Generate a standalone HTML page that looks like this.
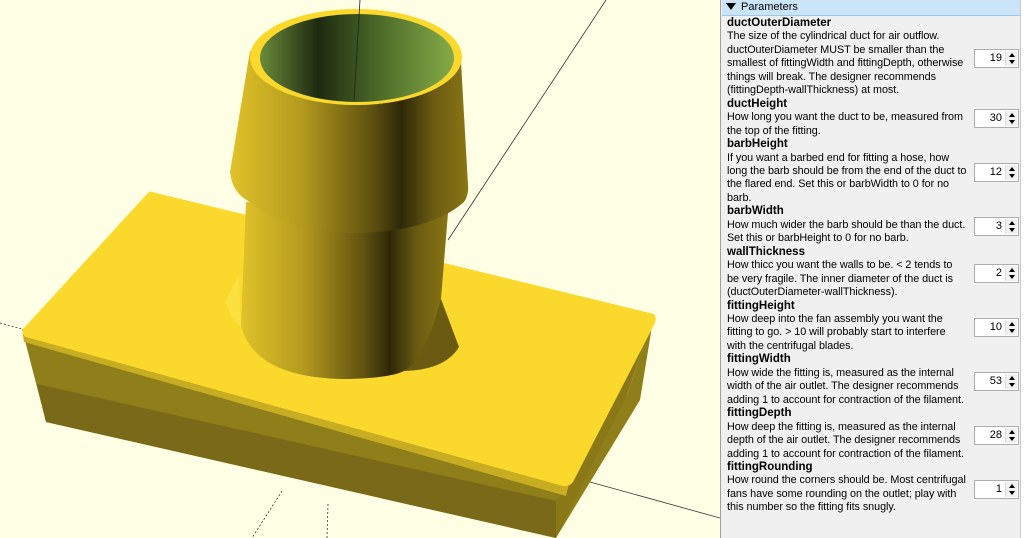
<!DOCTYPE html>
<html><head><meta charset="utf-8"><style>
*{margin:0;padding:0;box-sizing:border-box}
body{width:1024px;height:538px;overflow:hidden;background:#ffffe5;position:relative;font-family:"Liberation Sans",sans-serif}
#view{position:absolute;left:0;top:0}
#panel{position:absolute;left:720px;top:0;width:304px;height:538px;background:#f0f0f0;border-left:1px solid #a0a0a0}
#panel .edge{position:absolute;right:0;top:0;width:4px;height:538px;background:#fff;border-left:1px solid #c8c8c8}
#hdr{position:absolute;left:1px;top:0;width:298px;height:16px;background:#cce4f7;border-bottom:1px solid #99c9ef;font-size:11px;line-height:15px;padding-left:4px;color:#000}
#hdr span{display:inline-block;width:0;height:0;border-left:5px solid transparent;border-right:5px solid transparent;border-top:7px solid #000;margin-right:5px;vertical-align:0px}
#txt{position:absolute;left:6px;top:17px;font-size:10.8px;line-height:13.45px;color:#000;white-space:nowrap;letter-spacing:-0.05px}
#txt b{font-size:11.5px;letter-spacing:0}
.sp{position:absolute;left:253px;width:45px;height:19px;background:#fff;border:1px solid #adadad;font-size:11px;text-align:right;padding-right:16px;line-height:17px}
.sp i{position:absolute;right:1px;top:1px;width:12px;height:15px;background:#f0f0f0;border-left:1px solid #ddd}
.sp i:before{content:"";position:absolute;left:3px;top:2px;border-left:3px solid transparent;border-right:3px solid transparent;border-bottom:4px solid #000}
.sp i:after{content:"";position:absolute;left:3px;top:9px;border-left:3px solid transparent;border-right:3px solid transparent;border-top:4px solid #000}
</style></head><body>
<svg id="view" width="720" height="538" viewBox="0 0 720 538">
<defs>
<linearGradient id="cyl" x1="0" x2="1">
<stop offset="0" stop-color="#e0c22a"/><stop offset="0.3" stop-color="#b49a1e"/><stop offset="0.6" stop-color="#5e5010"/><stop offset="0.72" stop-color="#2e2808"/><stop offset="0.85" stop-color="#6a5a12"/><stop offset="1" stop-color="#8a7614"/>
</linearGradient>
<linearGradient id="inn" x1="0" x2="1">
<stop offset="0" stop-color="#6a8a3a"/><stop offset="0.3" stop-color="#1e2a10"/><stop offset="0.6" stop-color="#4a6828"/><stop offset="1" stop-color="#86aa48"/>
</linearGradient>
</defs>
<line x1="0" y1="323" x2="22" y2="329" stroke="#333" stroke-dasharray="2,2" stroke-width="0.8"/>
<line x1="282" y1="491" x2="252" y2="538" stroke="#333" stroke-dasharray="2,2" stroke-width="0.8"/>
<line x1="328" y1="504" x2="327" y2="538" stroke="#333" stroke-dasharray="2,2" stroke-width="0.8"/>
<line x1="590" y1="482" x2="720" y2="518" stroke="#333" stroke-width="0.8"/>
<line x1="606" y1="0" x2="448" y2="240" stroke="#333" stroke-width="0.8"/>
<polygon points="22,329 569,484 627,395 654,314 640,400 556,538 46,422" fill="#8f7f1a"/>
<polygon points="37,384 556,501 556,538 46,422" fill="#7a6918"/>
<polygon points="569,484 654,314 627,395 556,538 556,501" fill="#8a7816"/>
<polygon points="22,329 569,484 566,496 24,342" fill="#c8ad22"/>
<path d="M152,192 L654,314 Q657,318 655,323 L573,482 Q569,487 563,486 L26,337 Q21,334 23,329 L147,194 Q149,191 152,192Z" fill="#fbd92c"/>
<path d="M239,275 L226,300 Q228,318 241,326Z" fill="#fbe040"/>
<path d="M441,299 L459,347 Q445,370 404,371 L420,340Z" fill="#6a5a12"/>
<path d="M246,202 L241,326 Q255,379 349,379 Q390,378 404,371 Q425,360 441,299 L448,213Z" fill="url(#cyl)"/>
<path d="M250,51 L230,172 Q232,192 248,201 Q290,233 354,233 Q430,232 464,202 Q469,195 468,185 L461,62Z" fill="url(#cyl)"/>
<ellipse cx="356" cy="57" rx="106" ry="48" fill="#fbd92c"/>
<ellipse cx="357" cy="58" rx="97" ry="44" fill="url(#inn)"/>
<line x1="360" y1="0" x2="354" y2="101" stroke="#222" stroke-width="0.8"/>
</svg>
<div id="panel">
<div class="edge"></div>
<div id="hdr"><span></span>Parameters</div>
<div id="txt">
<b>ductOuterDiameter</b><br>
The size of the cylindrical duct for air outflow.<br>
ductOuterDiameter MUST be smaller than the<br>
smallest of fittingWidth and fittingDepth, otherwise<br>
things will break. The designer recommends<br>
(fittingDepth-wallThickness) at most.<br>
<b>ductHeight</b><br>
How long you want the duct to be, measured from<br>
the top of the fitting.<br>
<b>barbHeight</b><br>
If you want a barbed end for fitting a hose, how<br>
long the barb should be from the end of the duct to<br>
the flared end. Set this or barbWidth to 0 for no<br>
barb.<br>
<b>barbWidth</b><br>
How much wider the barb should be than the duct.<br>
Set this or barbHeight to 0 for no barb.<br>
<b>wallThickness</b><br>
How thicc you want the walls to be. &lt; 2 tends to<br>
be very fragile. The inner diameter of the duct is<br>
(ductOuterDiameter-wallThickness).<br>
<b>fittingHeight</b><br>
How deep into the fan assembly you want the<br>
fitting to go. &gt; 10 will probably start to interfere<br>
with the centrifugal blades.<br>
<b>fittingWidth</b><br>
How wide the fitting is, measured as the internal<br>
width of the air outlet. The designer recommends<br>
adding 1 to account for contraction of the filament.<br>
<b>fittingDepth</b><br>
How deep the fitting is, measured as the internal<br>
depth of the air outlet. The designer recommends<br>
adding 1 to account for contraction of the filament.<br>
<b>fittingRounding</b><br>
How round the corners should be. Most centrifugal<br>
fans have some rounding on the outlet; play with<br>
this number so the fitting fits snugly.
</div>
<div class="sp" style="top:49px">19<i></i></div>
<div class="sp" style="top:109px">30<i></i></div>
<div class="sp" style="top:163px">12<i></i></div>
<div class="sp" style="top:217px">3<i></i></div>
<div class="sp" style="top:264px">2<i></i></div>
<div class="sp" style="top:318px">10<i></i></div>
<div class="sp" style="top:372px">53<i></i></div>
<div class="sp" style="top:426px">28<i></i></div>
<div class="sp" style="top:480px">1<i></i></div>
</div>
</body></html>
